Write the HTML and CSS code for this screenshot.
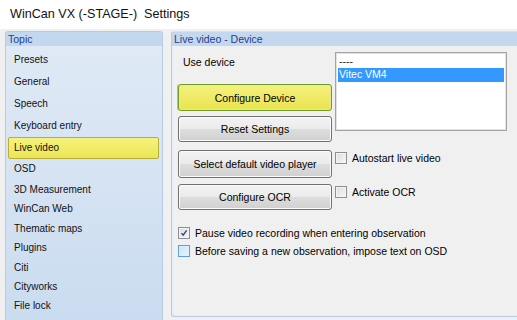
FILE: index.html
```html
<!DOCTYPE html>
<html>
<head>
<meta charset="utf-8">
<link rel="stylesheet" href="styles.css">
</head>
<body>
<div class="window">
  <div class="titlebar">WinCan VX (-STAGE-)&nbsp;&nbsp;Settings</div>
  <div class="main">
    <div class="topics">
      <div class="panel-head">Topic</div>
      <ul class="topic-list">
        <li class="topic tall">Presets</li>
        <li class="topic tall">General</li>
        <li class="topic tall">Speech</li>
        <li class="topic tall">Keyboard entry</li>
        <li class="topic tall selected">Live video</li>
        <li class="topic mid">OSD</li>
        <li class="topic">3D Measurement</li>
        <li class="topic">WinCan Web</li>
        <li class="topic">Thematic maps</li>
        <li class="topic">Plugins</li>
        <li class="topic">Citi</li>
        <li class="topic">Cityworks</li>
        <li class="topic">File lock</li>
      </ul>
    </div>
    <div class="detail">
      <div class="panel-head detail-head">Live video - Device</div>
      <div class="detail-body">
        <div class="device-grid">
          <div class="use-label">Use device</div>
          <div class="listbox">
            <div class="list-item">----</div>
            <div class="list-item chosen">Vitec VM4</div>
          </div>
          <div class="cell"><button class="btn btn-active">Configure Device</button></div>
          <div class="cell"><button class="btn btn-short">Reset Settings</button></div>
          <div class="cell"><button class="btn btn-tall">Select default video player</button></div>
          <div class="cell side"><label class="check"><span class="box"></span>Autostart live video</label></div>
          <div class="cell"><button class="btn btn-short">Configure OCR</button></div>
          <div class="cell side"><label class="check"><span class="box"></span>Activate OCR</label></div>
        </div>
        <div class="options">
          <label class="check"><span class="box checked"><svg viewBox="0 0 12 12" width="12" height="12"><path d="M3 6.2 L5 8.6 L9.2 2.8" fill="none" stroke="#2b3f8f" stroke-width="1.6"/></svg></span>Pause video recording when entering observation</label>
          <label class="check"><span class="box hover"></span>Before saving a new observation, impose text on OSD</label>
        </div>
      </div>
    </div>
  </div>
</div>
</body>
</html>
```
FILE: styles.css
```css
* { box-sizing: border-box; }
html, body { margin: 0; padding: 0; }
body {
  width: 517px;
  height: 320px;
  overflow: hidden;
  background: #f0f0f0;
  font-family: "Liberation Sans", Arial, sans-serif;
  color: #000;
}
.window { width: 517px; height: 320px; display: flex; flex-direction: column; }
.titlebar {
  height: 29px;
  line-height: 29px;
  background: #fff;
  padding-left: 10px;
  font-size: 12.6px;
  color: #111;
  flex: none;
}
.main {
  display: flex;
  flex: 1;
  padding: 2px 0 0 5px;
  gap: 8px;
  min-height: 0;
}
.topics {
  width: 158px;
  flex: none;
  border: 1px solid #b6cbe5;
  border-bottom: none;
  border-radius: 3px 3px 0 0;
  background: linear-gradient(#e1eaf6, #cadcf0);
  display: flex;
  flex-direction: column;
}
.panel-head {
  height: 14px;
  line-height: 14px;
  background: #c3d7ee;
  color: #22408e;
  font-size: 10.5px;
  padding-left: 2px;
  flex: none;
}
.topic-list {
  list-style: none;
  margin: 0;
  padding: 3px 3px 0 2px;
}
.topic {
  height: 19.4px;
  line-height: 17.4px;
  font-size: 10px;
  padding-left: 5px;
  color: #111;
  border: 1px solid transparent;
}
.topic.tall { height: 22px; line-height: 20px; }
.topic.mid { height: 21px; line-height: 18px; }
.topic.selected {
  background: linear-gradient(#f6f27c, #ece654);
  border-color: #b9ae3a;
  border-radius: 2px;
}
.detail {
  flex: 1;
  min-width: 0;
  margin-right: -10px;
  margin-bottom: 3px;
  border-left: 1px solid #b6cbe5;
  border-bottom: 1px solid #b6cbe5;
  border-top: 1px solid #d4e2f2;
  border-radius: 3px 0 0 3px;
  box-shadow: inset 1px -1px 0 #e4edf8;
  display: flex;
  flex-direction: column;
}
.detail-head { padding-left: 2px; }
.detail-body {
  padding: 6px 0 0 6px;
  font-size: 10.5px;
}
.device-grid {
  display: grid;
  grid-template-columns: 154px 172px;
  grid-template-rows: 32px 32px 34px 34px 26px;
  column-gap: 3px;
}
.use-label {
  line-height: 20px;
  padding-left: 5px;
}
.listbox {
  grid-column: 2;
  grid-row: 1 / 4;
  height: 79px;
  background: #fff;
  border: 1px solid #a3a3a3;
  box-shadow: inset 0 0 0 1px #e2e2e2;
  padding: 2px 2px 0 2px;
}
.list-item {
  height: 13px;
  line-height: 13px;
  font-size: 10.5px;
  padding-left: 1px;
  color: #222;
}
.list-item.chosen {
  background: #3399ff;
  color: #fff;
  height: 13.5px;
}
.cell { display: flex; align-items: flex-start; }
.side { padding-top: 2px; }
.btn {
  width: 154px;
  height: 27px;
  font-family: inherit;
  font-size: 10.5px;
  color: #000;
  border: 1px solid #707070;
  border-radius: 3px;
  background: linear-gradient(#f3f3f3 0%, #ebebeb 48%, #dddddd 52%, #d0d0d0 100%);
  box-shadow: inset 0 0 0 1px #fbfbfb;
  padding: 0;
}
.btn-short { height: 26px; }
.btn-tall { height: 28px; }
.btn-active {
  background: linear-gradient(#f5f17e, #e9e34f);
  border-color: #6f9a2e;
  box-shadow: inset 0 0 0 1px #eee98a, -1px 0 0 #e7b34a;
}
.check {
  display: flex;
  align-items: center;
  gap: 5px;
  font-size: 10.5px;
  height: 12px;
  line-height: 12px;
}
.box {
  width: 12px;
  height: 12px;
  flex: none;
  border: 1px solid #8e8f8f;
  background: linear-gradient(135deg, #dcdcdc, #f8f8f8);
  box-shadow: inset 0 0 0 1px #f4f4f4;
  display: flex;
  align-items: center;
  justify-content: center;
}
.box svg { display: block; }
.box.hover {
  border-color: #5f9ed8;
  background: linear-gradient(135deg, #c9e2f8, #eaf4fd);
  box-shadow: inset 0 0 0 1px #def0fd;
}
.options {
  margin-top: 17px;
  display: flex;
  flex-direction: column;
  gap: 6px;
}
```
